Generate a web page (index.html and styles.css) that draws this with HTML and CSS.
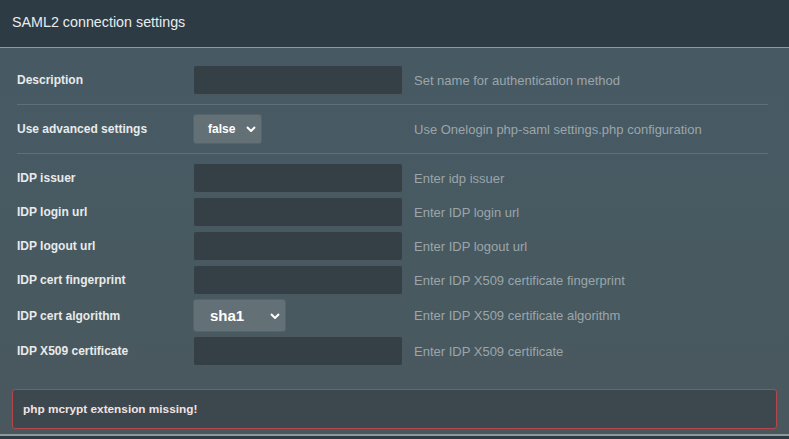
FILE: index.html
```html
<!DOCTYPE html>
<html>
<head>
<meta charset="utf-8">
<link rel="stylesheet" href="styles.css">
</head>
<body>
<div class="panel">
  <div class="panel-head">SAML2 connection settings</div>
  <div class="panel-body">
    <div class="group">
      <div class="row">
        <label class="lbl">Description</label>
        <div class="field"><input class="inp" type="text"></div>
        <div class="hint">Set name for authentication method</div>
      </div>
    </div>
    <div class="group">
      <div class="row">
        <label class="lbl">Use advanced settings</label>
        <div class="field"><div class="sel sel-small"><span>false</span><svg class="chev" viewBox="0 0 10 6" width="10" height="6"><path d="M1 1 L5 5 L9 1" fill="none" stroke="#fff" stroke-width="2"/></svg></div></div>
        <div class="hint">Use Onelogin php-saml settings.php configuration</div>
      </div>
    </div>
    <div class="group last">
      <div class="row">
        <label class="lbl">IDP issuer</label>
        <div class="field"><input class="inp" type="text"></div>
        <div class="hint">Enter idp issuer</div>
      </div>
      <div class="row">
        <label class="lbl">IDP login url</label>
        <div class="field"><input class="inp" type="text"></div>
        <div class="hint">Enter IDP login url</div>
      </div>
      <div class="row">
        <label class="lbl">IDP logout url</label>
        <div class="field"><input class="inp" type="text"></div>
        <div class="hint">Enter IDP logout url</div>
      </div>
      <div class="row">
        <label class="lbl">IDP cert fingerprint</label>
        <div class="field"><input class="inp" type="text"></div>
        <div class="hint">Enter IDP X509 certificate fingerprint</div>
      </div>
      <div class="row">
        <label class="lbl">IDP cert algorithm</label>
        <div class="field"><div class="sel sel-wide"><span>sha1</span><svg class="chev" viewBox="0 0 10 6" width="10" height="6"><path d="M1 1 L5 5 L9 1" fill="none" stroke="#fff" stroke-width="2"/></svg></div></div>
        <div class="hint">Enter IDP X509 certificate algorithm</div>
      </div>
      <div class="row">
        <label class="lbl">IDP X509 certificate</label>
        <div class="field"><input class="inp" type="text"></div>
        <div class="hint">Enter IDP X509 certificate</div>
      </div>
    </div>
    <div class="alert">php mcrypt extension missing!</div>
  </div>
  <div class="panel-foot"></div>
</div>
</body>
</html>
```
FILE: styles.css
```css
html, body {
  margin: 0;
  padding: 0;
  background: #2c3a44;
  font-family: "Liberation Sans", Arial, sans-serif;
}
.panel {
  width: 789px;
  height: 439px;
  overflow: hidden;
  display: flex;
  flex-direction: column;
}
.panel-head {
  height: 48px;
  box-sizing: border-box;
  padding: 14px 12px 0 12px;
  background: #2d3b45;
  color: #e9ecee;
  font-size: 14.3px;
  border-bottom: 1px solid #8c9aa1;
  flex: none;
}
.panel-body {
  background: linear-gradient(180deg, #475a64 0%, #485960 60%, #4a585e 100%);
  padding: 17px 21px 0 17px;
  flex: none;
  height: 386px;
  box-sizing: border-box;
}
.group {
  border-bottom: 1px solid #5e7079;
  padding-bottom: 9px;
  margin-bottom: 9px;
}
.group.last {
  border-bottom: none;
  margin-bottom: 0;
  padding-bottom: 0;
  display: flex;
  flex-direction: column;
  gap: 4px;
}
.row {
  display: grid;
  grid-template-columns: 165px 210px 1fr;
  column-gap: 11px;
  align-items: center;
}
.lbl {
  color: #e8eaeb;
  font-size: 12px;
  font-weight: bold;
}
.hint {
  color: #9ba6ab;
  font-size: 13px;
}
.inp {
  display: block;
  box-sizing: border-box;
  width: 210px;
  height: 30px;
  margin: 0;
  background: #343f46;
  border: 1px solid #4b585f;
  border-radius: 3px;
  outline: none;
}
.sel {
  box-sizing: border-box;
  height: 30px;
  background: #637177;
  border: 1px solid #56646a;
  border-radius: 3px;
  color: #ffffff;
  font-weight: bold;
  display: flex;
  align-items: center;
  justify-content: space-between;
}
.sel-small {
  width: 69px;
  font-size: 12px;
  padding: 0 5px 0 14px;
}
.sel-wide {
  width: 93px;
  height: 33px;
  font-size: 15px;
  padding: 0 5px 0 16px;
}
.chev {
  display: block;
}
.alert {
  margin: 23px -9px 0 -5px;
  height: 40px;
  box-sizing: border-box;
  border: 1px solid #b5474a;
  border-radius: 3px;
  background: #3c484e;
  color: #f3e2e2;
  font-weight: bold;
  font-size: 11.8px;
  padding: 12px 10px 0 10px;
}
.panel-foot {
  flex: 1;
  border-top: 2px solid #8d999f;
  background: #2c3a44;
}
```
